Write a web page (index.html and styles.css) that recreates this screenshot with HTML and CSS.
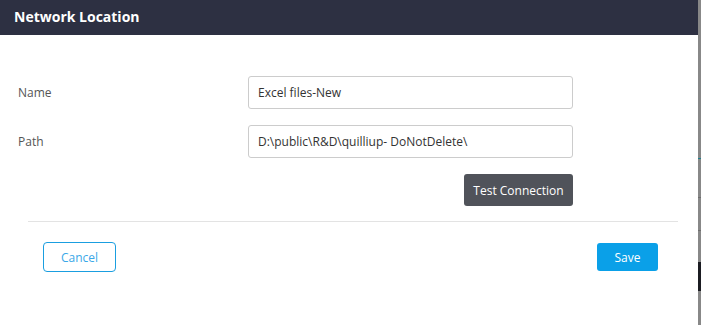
FILE: index.html
```html
<!DOCTYPE html>
<html lang="en">
<head>
    <meta charset="UTF-8">
    <title>Network Location</title>
    <link rel="stylesheet" href="styles.css">
</head>
<body>
    <div class="page">
        <div class="dialog">
            <header class="dialog-header">
                <h1>Network Location</h1>
            </header>
            <main class="dialog-body">
                <div class="form-row">
                    <label for="loc-name">Name</label>
                    <input type="text" id="loc-name" value="Excel files-New">
                </div>
                <div class="form-row">
                    <label for="loc-path">Path</label>
                    <input type="text" id="loc-path" value="D:\public\R&amp;D\quilliup- DoNotDelete\">
                </div>
                <div class="test-row">
                    <button type="button" class="btn-test">Test Connection</button>
                </div>
            </main>
            <footer class="dialog-footer">
                <button type="button" class="btn-cancel">Cancel</button>
                <button type="button" class="btn-save">Save</button>
            </footer>
        </div>
        <div class="backdrop">
            <span class="mark mark-teal"></span>
            <span class="mark mark-line1"></span>
            <span class="mark mark-line2"></span>
            <span class="mark mark-dark"></span>
        </div>
    </div>
</body>
</html>
```

FILE: styles.css
```css
/* General */
body {
    font-family: 'Open Sans', 'Liberation Sans', sans-serif;
    margin: 0;
    padding: 0;
    background-color: #888888;
}

.page {
    display: flex;
    height: 325px;
    overflow: hidden;
}

.dialog {
    width: 698px;
    flex-shrink: 0;
    background-color: #ffffff;
    display: flex;
    flex-direction: column;
}

/* Header */
.dialog-header {
    background-color: #2d3042;
    height: 35px;
    padding-left: 14px;
    display: flex;
    align-items: center;
}

.dialog-header h1 {
    margin: 0;
    color: #ffffff;
    font-size: 14px;
    font-weight: 700;
    padding-bottom: 2px;
}

/* Body */
.dialog-body {
    padding: 41px 125px 0 18px;
    display: flex;
    flex-direction: column;
    gap: 16px;
}

.form-row {
    display: flex;
    align-items: center;
}

.form-row label {
    width: 230px;
    font-size: 12px;
    color: #555555;
}

.form-row input {
    width: 325px;
    height: 33px;
    box-sizing: border-box;
    border: 1px solid #cccccc;
    border-radius: 3px;
    padding: 0 9px;
    font-family: inherit;
    font-size: 12px;
    color: #333333;
}

.test-row {
    display: flex;
    justify-content: flex-end;
}

.btn-test {
    width: 109px;
    height: 32px;
    background-color: #50535a;
    color: #ffffff;
    border: none;
    border-radius: 3px;
    font-family: inherit;
    font-size: 12px;
    padding: 0;
}

/* Footer */
.dialog-footer {
    margin: 15px 20px 0 28px;
    border-top: 1px solid #e3e3e3;
    padding: 20px 20px 0 15px;
    display: flex;
    justify-content: space-between;
    align-items: flex-start;
}

.btn-cancel {
    width: 73px;
    height: 30px;
    background-color: #ffffff;
    color: #3aa8e8;
    border: 1px solid #1a9ee0;
    border-radius: 4px;
    font-family: inherit;
    font-size: 12px;
    padding: 0;
}

.btn-save {
    width: 61px;
    height: 28px;
    margin-top: 1px;
    background-color: #0aa0e8;
    color: #ffffff;
    border: none;
    border-radius: 3px;
    font-family: inherit;
    font-size: 12px;
    padding: 0;
}

/* Backdrop strip on the right */
.backdrop {
    flex: 1;
    position: relative;
    background-color: #888888;
}

.mark {
    position: absolute;
    left: 0;
    right: 0;
}

.mark-teal {
    top: 158px;
    height: 1px;
    background-color: #1d7f8c;
}

.mark-line1 {
    top: 197px;
    height: 1px;
    background-color: #6e6e6e;
}

.mark-line2 {
    top: 230px;
    height: 1px;
    background-color: #6e6e6e;
}

.mark-dark {
    top: 262px;
    height: 29px;
    background-color: #1b1c22;
}
```
